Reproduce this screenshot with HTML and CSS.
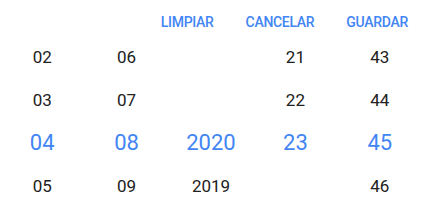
FILE: index.html
```html
<!DOCTYPE html>
<html lang="es">
<head>
    <meta charset="UTF-8">
    <meta name="viewport" content="width=device-width, initial-scale=1.0">
    <title>Selector de fecha</title>
    <link rel="stylesheet" href="styles.css">
</head>
<body>
    <div class="actions">
        <span class="btn">LIMPIAR</span>
        <span class="btn">CANCELAR</span>
        <span class="btn">GUARDAR</span>
    </div>
    <div class="wheel">
        <span>02</span><span>06</span><span></span><span>21</span><span>43</span>
        <span>03</span><span>07</span><span></span><span>22</span><span>44</span>
        <span class="sel">04</span><span class="sel">08</span><span class="sel">2020</span><span class="sel">23</span><span class="sel">45</span>
        <span>05</span><span>09</span><span>2019</span><span></span><span>46</span>
    </div>
</body>
</html>
```

FILE: styles.css
```css
:root {
    --blue: #4285f4;
    --text: #212121;
}
body {
    margin: 0;
    background: #fff;
    font-family: Roboto, 'Noto Sans', sans-serif;
    color: var(--text);
}
.actions {
    display: flex;
    justify-content: flex-end;
    gap: 32px;
    padding: 12px 14px 3px 0;
    height: 20px;
}
.btn {
    color: var(--blue);
    font-size: 14px;
    font-weight: 500;
    line-height: 20px;
    letter-spacing: -0.3px;
}
.wheel {
    display: grid;
    grid-template-columns: repeat(5, 1fr);
    grid-auto-rows: 43px;
}
.wheel span {
    display: flex;
    justify-content: center;
    align-items: center;
    font-size: 17px;
}
.wheel .sel {
    color: var(--blue);
    font-size: 22px;
}
```
